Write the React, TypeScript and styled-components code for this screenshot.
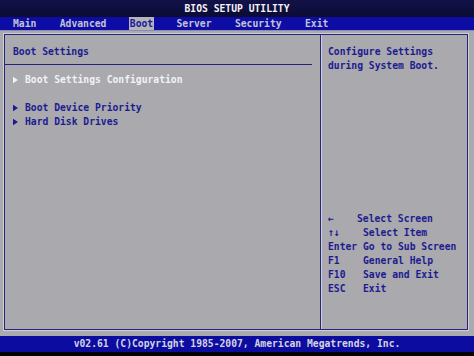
import React from "react";
import styled, { createGlobalStyle } from "styled-components";

const Global = createGlobalStyle`
  html, body { margin: 0; padding: 0; background: #000; }
  body { width: 474px; height: 356px; overflow: hidden; }
  #root { width: 474px; height: 356px; }
`;

const FONT = `"DejaVu Sans Mono", "Liberation Mono", monospace`;

const Screen = styled.div`
  width: 474px;
  height: 356px;
  display: flex;
  flex-direction: column;
  background: #000;
  font-family: ${FONT};
  font-size: 9.7px;
  font-weight: bold;
  line-height: 14px;
`;

const TitleBar = styled.div`
  height: 17px;
  flex: none;
  display: flex;
  align-items: center;
  justify-content: center;
  background: linear-gradient(180deg, #12124a 0%, #0b0b34 100%);
  color: #f4f4f8;
`;

const TitleText = styled.span`
  display: inline-block;
  transform: scaleY(1.12);
`;

const MenuBar = styled.div`
  height: 13px;
  flex: none;
  display: flex;
  align-items: center;
  gap: 23.4px;
  padding-left: 13px;
  background: #0d0da6;
  border-bottom: 1px solid #8a8ab8;
`;

const MenuItem = styled.span<{ $active?: boolean }>`
  color: ${(p) => (p.$active ? "#1a1a9a" : "#c4c4d4")};
  background: ${(p) => (p.$active ? "#b4b4bc" : "transparent")};
  line-height: 13px;
  padding: 0 1px;
  margin: 0 -1px;
`;

const Body = styled.div`
  flex: 1;
  background: #a9a9ae;
  padding: 3px 6px 6px 4px;
  display: flex;
`;

const Frame = styled.div`
  flex: 1;
  display: grid;
  grid-template-columns: 315px 1fr;
  border: 1px solid #24247e;
  box-shadow: 0 0 0 1px #cfcfd8;
`;

const LeftPanel = styled.div`
  display: flex;
  flex-direction: column;
  padding: 10px 0 0 8px;
  color: #1c1c8e;
`;

const RightPanel = styled.div`
  display: flex;
  flex-direction: column;
  padding: 10px 0 33px 7px;
  border-left: 1px solid #24247e;
  box-shadow: inset 1px 0 0 #cfcfd8;
  color: #1c1c8e;
`;

const Row = styled.div<{ $selected?: boolean }>`
  height: 14px;
  display: flex;
  align-items: center;
  white-space: pre;
  transform: scaleY(1.12);
  color: ${(p) => (p.$selected ? "#f2f2f6" : "inherit")};
`;

const Separator = styled.div`
  height: 14px;
  box-sizing: border-box;
  padding-top: 5px;
  display: flex;
  align-items: flex-start;
  margin-left: -8px;
  margin-right: 8px;
  &::after {
    content: "";
    flex: 1;
    height: 1px;
    background: #24247e;
  }
`;

const Gap = styled.div`
  height: 14px;
`;

const Arrow = styled.span`
  display: inline-block;
  width: 0;
  height: 0;
  border-left: 5px solid currentColor;
  border-top: 3px solid transparent;
  border-bottom: 3px solid transparent;
  margin-right: 7px;
`;

const Legend = styled.div`
  margin-top: auto;
  display: flex;
  flex-direction: column;
`;

const Key = styled.span`
  width: 35px;
  flex: none;
`;

const Desc = styled.span<{ $shift?: number }>`
  margin-left: ${(p) => -(p.$shift ?? 0)}px;
`;

const Footer = styled.div`
  height: 16px;
  flex: none;
  display: flex;
  align-items: center;
  justify-content: center;
  background: #0c0ca0;
  color: #d4d4e0;
  margin-bottom: 4px;
`;

const menu = ["Main", "Advanced", "Boot", "Server", "Security", "Exit"];

const legend: { k: string; d: string; shift?: number }[] = [
  { k: "←", d: "Select Screen", shift: 6 },
  { k: "↑↓", d: "Select Item" },
  { k: "Enter", d: "Go to Sub Screen" },
  { k: "F1", d: "General Help" },
  { k: "F10", d: "Save and Exit" },
  { k: "ESC", d: "Exit" },
];

export default function App() {
  return (
    <>
      <Global />
      <Screen>
        <TitleBar>
          <TitleText>BIOS SETUP UTILITY</TitleText>
        </TitleBar>
        <MenuBar>
          {menu.map((m) => (
            <MenuItem key={m} $active={m === "Boot"}>
              {m}
            </MenuItem>
          ))}
        </MenuBar>
        <Body>
          <Frame>
            <LeftPanel>
              <Row>Boot Settings</Row>
              <Separator />
              <Row $selected>
                <Arrow />
                Boot Settings Configuration
              </Row>
              <Gap />
              <Row>
                <Arrow />
                Boot Device Priority
              </Row>
              <Row>
                <Arrow />
                Hard Disk Drives
              </Row>
            </LeftPanel>
            <RightPanel>
              <Row>Configure Settings</Row>
              <Row>during System Boot.</Row>
              <Legend>
                {legend.map((l) => (
                  <Row key={l.k}>
                    <Key>{l.k}</Key>
                    <Desc $shift={l.shift}>{l.d}</Desc>
                  </Row>
                ))}
              </Legend>
            </RightPanel>
          </Frame>
        </Body>
        <Footer>v02.61 (C)Copyright 1985-2007, American Megatrends, Inc.</Footer>
      </Screen>
    </>
  );
}
